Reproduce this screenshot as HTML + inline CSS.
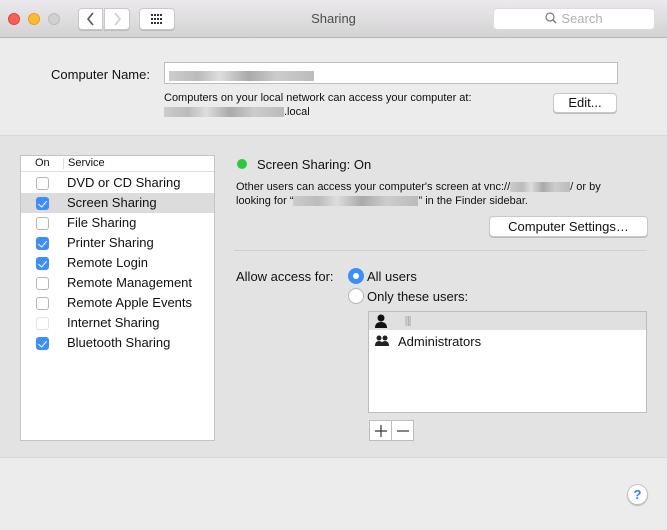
<!DOCTYPE html>
<html><head><style>
*{margin:0;padding:0;box-sizing:border-box}
body{width:667px;height:530px;position:relative;overflow:hidden;background:#ececec;font-family:"Liberation Sans",sans-serif;font-size:13px;color:#111}
.a{position:absolute}
.btn{position:absolute;background:#fff;border:1px solid #c8c8c8;border-radius:4px;box-shadow:0 1px 0 #bdbdbd;text-align:center}
.blur{display:inline-block;background:linear-gradient(90deg,#ccc,#bbb 20%,#ddd 35%,#aaa 55%,#ccc 75%,#bbb);height:10px;vertical-align:middle}
.cb{position:absolute;left:15px;width:13px;height:13px;border:1px solid #b5b5b5;border-radius:3px;background:#fff}
.cb.on{background:#3d8ff7;border-color:#3d8ff7}
.cb.on::after{content:"";position:absolute;left:3px;top:1px;width:4px;height:7px;border:solid #fff;border-width:0 1.5px 1.5px 0;transform:rotate(40deg)}
.row{position:absolute;left:0;width:193px;height:20px;line-height:20px}
.row span{position:absolute;left:46px}
</style></head><body>
<div class="a" style="left:0;top:0;width:667px;height:38px;background:linear-gradient(#ebe9eb,#d4d3d4);border-bottom:1px solid #b4b4b4"></div>
<div class="a" style="left:8px;top:13px;width:12px;height:12px;border-radius:50%;background:#fc5f57;border:1px solid #e0443e"></div>
<div class="a" style="left:28px;top:13px;width:12px;height:12px;border-radius:50%;background:#fdbc2e;border:1px solid #dea123"></div>
<div class="a" style="left:48px;top:13px;width:12px;height:12px;border-radius:50%;background:#d0d0d0;border:1px solid #bcbcbc"></div>
<div class="btn" style="left:78px;top:8px;width:25px;height:22px;border-radius:4px 0 0 4px"><svg width="23" height="20"><path d="M14 4 L9 10 L14 16" stroke="#555" stroke-width="1.6" fill="none"/></svg></div>
<div class="btn" style="left:104px;top:8px;width:26px;height:22px;border-radius:0 4px 4px 0"><svg width="24" height="20"><path d="M10 4 L15 10 L10 16" stroke="#ccc" stroke-width="1.6" fill="none"/></svg></div>
<div class="btn" style="left:139px;top:8px;width:36px;height:22px"><svg width="34" height="20"><g fill="#333"><rect x="11" y="5" width="2" height="2"/><rect x="14" y="5" width="2" height="2"/><rect x="17" y="5" width="2" height="2"/><rect x="20" y="5" width="2" height="2"/><rect x="11" y="9" width="2" height="2"/><rect x="14" y="9" width="2" height="2"/><rect x="17" y="9" width="2" height="2"/><rect x="20" y="9" width="2" height="2"/><rect x="11" y="13" width="2" height="2"/><rect x="14" y="13" width="2" height="2"/><rect x="17" y="13" width="2" height="2"/><rect x="20" y="13" width="2" height="2"/></g></svg></div>
<div class="a" style="left:0;top:11px;width:667px;text-align:center;color:#4d4d4d;font-size:13px">Sharing</div>
<div class="btn" style="left:493px;top:8px;width:162px;height:22px;box-shadow:none;border-color:#ddd;color:#b0b0b0;line-height:20px"><svg width="12" height="12" style="vertical-align:-1px;margin-right:4px"><circle cx="5" cy="5" r="4" stroke="#777" stroke-width="1.2" fill="none"/><path d="M8 8 L11 11" stroke="#777" stroke-width="1.3"/></svg>Search</div>

<div class="a" style="left:51px;top:67px">Computer Name:</div>
<div class="a" style="left:164px;top:62px;width:454px;height:22px;background:#fff;border:1px solid #bdbdbd;padding:4px 4px"><span class="blur" style="width:145px"></span></div>
<div class="a" style="left:164px;top:91px;font-size:11px;line-height:14px">Computers on your local network can access your computer at:<br><span class="blur" style="width:120px"></span>.local</div>
<div class="btn" style="left:553px;top:93px;width:64px;height:20px;line-height:18px">Edit...</div>

<div class="a" style="left:0;top:135px;width:667px;height:323px;background:#e3e3e3;border-top:1px solid #d6d6d6;border-bottom:1px solid #d6d6d6"></div>

<div class="a" style="left:20px;top:155px;width:195px;height:286px;background:#fff;border:1px solid #c4c4c4">
<div class="a" style="left:0;top:0;width:193px;height:16px;border-bottom:1px solid #ddd;font-size:11px;line-height:15px"><span class="a" style="left:14px">On</span><span class="a" style="left:42px;top:2px;height:11px;border-left:1px solid #ddd"></span><span class="a" style="left:47px">Service</span></div>
<div class="row" style="top:17px"><i class="cb" style="top:4px"></i><span>DVD or CD Sharing</span></div>
<div class="row" style="top:37px;background:#dcdcdc"><i class="cb on" style="top:4px"></i><span>Screen Sharing</span></div>
<div class="row" style="top:57px"><i class="cb" style="top:4px"></i><span>File Sharing</span></div>
<div class="row" style="top:77px"><i class="cb on" style="top:4px"></i><span>Printer Sharing</span></div>
<div class="row" style="top:97px"><i class="cb on" style="top:4px"></i><span>Remote Login</span></div>
<div class="row" style="top:117px"><i class="cb" style="top:4px"></i><span>Remote Management</span></div>
<div class="row" style="top:137px"><i class="cb" style="top:4px"></i><span>Remote Apple Events</span></div>
<div class="row" style="top:157px"><i class="cb" style="top:4px;border-color:#e2e2e2"></i><span>Internet Sharing</span></div>
<div class="row" style="top:177px"><i class="cb on" style="top:4px"></i><span>Bluetooth Sharing</span></div>
</div>

<div class="a" style="left:237px;top:159px;width:10px;height:10px;border-radius:50%;background:#2ec840"></div>
<div class="a" style="left:257px;top:157px">Screen Sharing: On</div>
<div class="a" style="left:236px;top:180px;font-size:11px;line-height:14px">Other users can access your computer's screen at vnc://<span class="blur" style="width:60px"></span>/ or by<br>looking for “<span class="blur" style="width:125px"></span>” in the Finder sidebar.</div>
<div class="btn" style="left:489px;top:216px;width:159px;height:21px;line-height:19px">Computer Settings…</div>
<div class="a" style="left:234px;top:250px;width:413px;height:1px;background:#cfcfcf"></div>

<div class="a" style="left:236px;top:269px">Allow access for:</div>
<div class="a" style="left:348px;top:268px;width:16px;height:16px;border-radius:50%;background:#3d8ff7"><div class="a" style="left:5px;top:5px;width:6px;height:6px;border-radius:50%;background:#fff"></div></div>
<div class="a" style="left:367px;top:269px">All users</div>
<div class="a" style="left:348px;top:288px;width:16px;height:16px;border-radius:50%;background:#fff;border:1px solid #b5b5b5"></div>
<div class="a" style="left:367px;top:289px">Only these users:</div>

<div class="a" style="left:368px;top:311px;width:279px;height:102px;background:#fff;border:1px solid #bdbdbd">
<div class="a" style="left:0;top:0;width:277px;height:18px;background:#e0e0e0"></div>
<svg class="a" style="left:5px;top:2px" width="14" height="15"><circle cx="7" cy="4" r="3.5" fill="#111"/><path d="M1 14 Q1 8 7 8 Q13 8 13 14Z" fill="#111"/></svg>
<span class="a blur" style="left:36px;top:4px;width:6px;height:10px"></span>
<svg class="a" style="left:5px;top:23px" width="16" height="12"><circle cx="5" cy="3" r="2.5" fill="#222"/><circle cx="11" cy="3" r="2.5" fill="#222"/><path d="M1 11 Q1 6 5 6 Q9 6 9 11Z M7 11 Q7 6 11 6 Q15 6 15 11Z" fill="#222"/></svg>
<div class="a" style="left:29px;top:22px">Administrators</div>
</div>
<div class="a" style="left:369px;top:420px;width:45px;height:21px;background:#fff;border:1px solid #bdbdbd"><div class="a" style="left:21px;top:0;width:1px;height:19px;background:#bdbdbd"></div>
<svg class="a" style="left:4px;top:3px" width="14" height="14"><path d="M7 1V13M1 7H13" stroke="#333" stroke-width="1.2"/></svg>
<svg class="a" style="left:26px;top:3px" width="14" height="14"><path d="M1 7H13" stroke="#333" stroke-width="1.2"/></svg></div>

<div class="a" style="left:627px;top:484px;width:21px;height:21px;border-radius:50%;background:#fff;border:1px solid #c0c0c0;box-shadow:0 1px 1px #bbb;color:#2f7df6;font-weight:bold;font-size:13px;text-align:center;line-height:19px">?</div>
</body></html>
